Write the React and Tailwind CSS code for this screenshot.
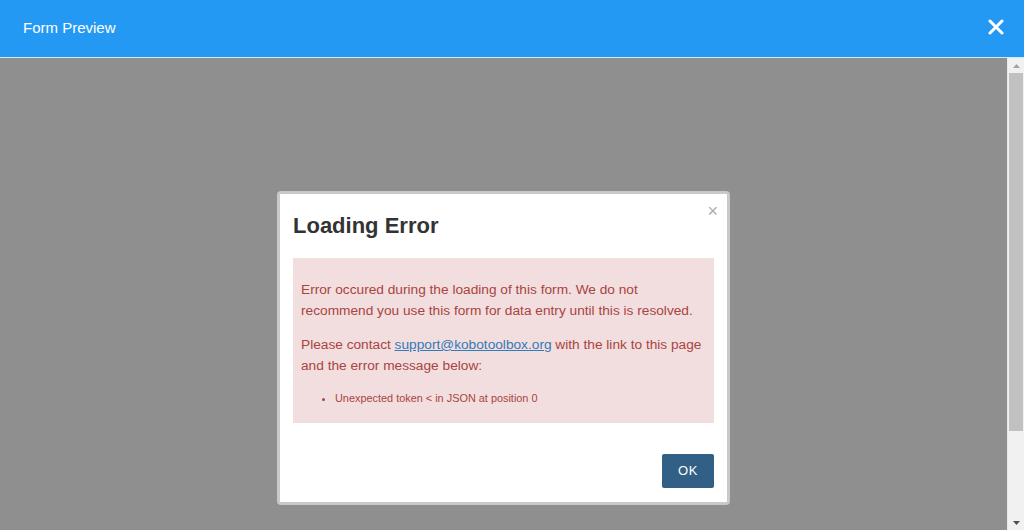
import React from "react";

export default function App() {
  return (
    <div className="w-[1024px] h-[530px] flex flex-col overflow-hidden" style={{ fontFamily: '"Liberation Sans", Arial, sans-serif' }}>
      <header className="h-[58px] shrink-0 bg-[#2399f3] border-b border-[#d6e6f0] flex items-center justify-between pl-[23px] pr-[20px]">
        <span className="text-white text-[15px]">Form Preview</span>
        <svg width="16" height="16" viewBox="0 0 16 16" className="mt-[-4px]">
          <path d="M2 2 L14 14 M14 2 L2 14" stroke="white" strokeWidth="3" strokeLinecap="round" />
        </svg>
      </header>
      <div className="flex flex-1 min-h-0">
        <div className="flex-1 bg-[#8f8f8f] flex justify-center pt-[133px]">
          <div className="w-[453px] h-[314px] border-[3px] border-[#c9c9c9] rounded-[4px] bg-white flex flex-col px-[13px]">
            <div className="flex justify-between items-start">
              <h1 className="text-[22px] font-bold text-[#333] mt-[19px] leading-[26px]">Loading Error</h1>
              <span className="text-[#aaa] text-[18px] leading-none mt-[8px] mr-[-4px]">×</span>
            </div>
            <div className="mt-[19px] bg-[#f2dede] text-[#a94442] text-[13.7px] leading-[20.5px] pl-[8px] pr-[8px] pt-[22px] pb-[16px]">
              <p>Error occured during the loading of this form. We do not recommend you use this form for data entry until this is resolved.</p>
              <p className="mt-[14px]">
                Please contact <a className="text-[#337ab7] underline">support@kobotoolbox.org</a> with the link to this page and the error message below:
              </p>
              <ul className="mt-[13px] pl-[34px] list-disc text-[10.9px] leading-[18px]">
                <li>Unexpected token &lt; in JSON at position 0</li>
              </ul>
            </div>
            <div className="flex justify-end mt-[31px]">
              <button className="w-[52px] h-[34px] bg-[#325f86] text-white text-[13px] tracking-[0.5px] rounded-[2px]">OK</button>
            </div>
          </div>
        </div>
        <div className="w-[17px] bg-[#f1f1f1] flex flex-col border-l border-[#e8e8e8]">
          <div className="h-[15px] flex items-center justify-center">
            <svg width="7" height="4" viewBox="0 0 7 4"><path d="M0 4 L3.5 0 L7 4 Z" fill="#a3a3a3" /></svg>
          </div>
          <div className="h-[358px] mx-[1px] bg-[#c1c1c1]" />
          <div className="flex-1" />
          <div className="h-[15px] flex items-center justify-center">
            <svg width="7" height="4" viewBox="0 0 7 4"><path d="M0 0 L3.5 4 L7 0 Z" fill="#505050" /></svg>
          </div>
        </div>
      </div>
    </div>
  );
}
